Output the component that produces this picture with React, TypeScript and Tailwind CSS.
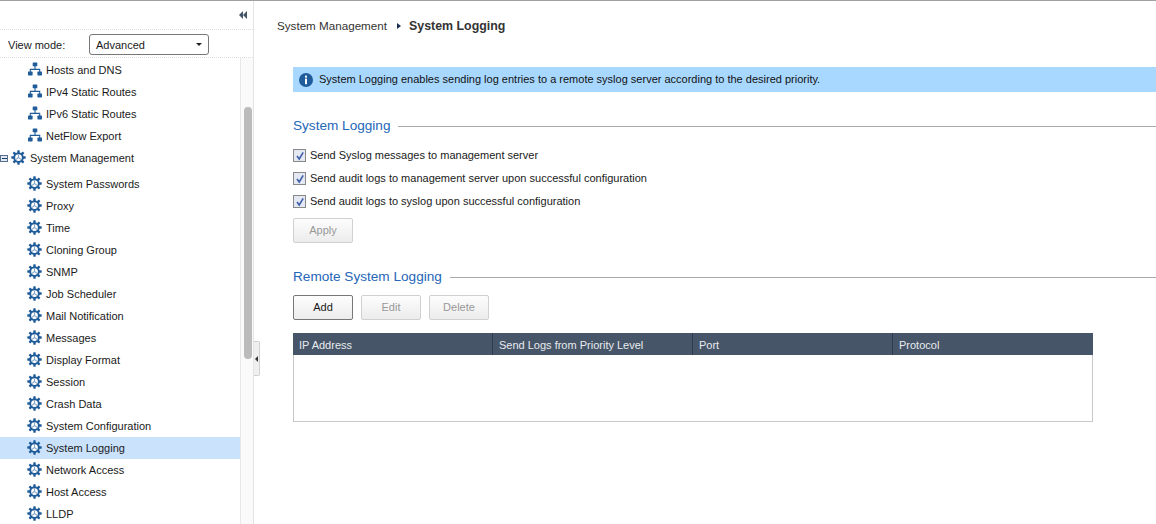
import { ReactNode } from "react";

const GearIcon = ({ className }: { className?: string }) => (
	<svg viewBox="0 0 16 16" className={className}>
		<g fill="#1f5c99">
			<rect x="6.7" y="0.3" width="2.6" height="15.4" rx="0.5" />
			<rect x="6.7" y="0.3" width="2.6" height="15.4" rx="0.5" transform="rotate(45 8 8)" />
			<rect x="6.7" y="0.3" width="2.6" height="15.4" rx="0.5" transform="rotate(90 8 8)" />
			<rect x="6.7" y="0.3" width="2.6" height="15.4" rx="0.5" transform="rotate(135 8 8)" />
		</g>
		<circle cx="8" cy="8" r="4.6" fill="#fff" stroke="#1f5c99" strokeWidth="2" />
		<path d="M8 8V4.4M8 8l-3 2.2M8 8l3 2.2" stroke="#8aa8c8" strokeWidth="1.1" fill="none" />
	</svg>
);

const NetworkIcon = ({ className }: { className?: string }) => (
	<svg viewBox="0 0 14 14" className={className}>
		<g fill="#1f5c99">
			<rect x="4.7" y="0.5" width="4.6" height="3.8" rx="0.6" />
			<rect x="0" y="9.6" width="4.6" height="3.8" rx="0.6" />
			<rect x="9.4" y="9.6" width="4.6" height="3.8" rx="0.6" />
		</g>
		<path d="M7 4v3.4M2.3 10V7.4h9.4V10" stroke="#1f5c99" strokeWidth="1.1" fill="none" />
	</svg>
);

const TreeRow = ({ label, selected }: { label: string; selected?: boolean }) => (
	<div className={`flex h-[22px] items-center pl-[27px] ${selected ? "bg-[#cbe2fd]" : ""}`}>
		<GearIcon className="h-[15px] w-[15px] shrink-0 -translate-y-[1px]" />
		<span className="ml-[4px]">{label}</span>
	</div>
);

const NetRow = ({ label }: { label: string }) => (
	<div className="flex h-[22px] items-center pl-[28px]">
		<NetworkIcon className="h-[14px] w-[14px] shrink-0 -translate-y-[1px]" />
		<span className="ml-[4px]">{label}</span>
	</div>
);

const Btn = ({ children, active }: { children: ReactNode; active?: boolean }) => (
	<button
		className={`h-[25px] w-[60px] rounded-[2px] border bg-gradient-to-b from-[#fdfdfd] to-[#ececec] text-[11px] ${
			active ? "border-[#777] text-[#1a1a1a]" : "border-[#d0d0d0] text-[#999]"
		}`}
	>
		{children}
	</button>
);

const SectionTitle = ({ children }: { children: ReactNode }) => (
	<div className="flex items-center gap-[8px]">
		<h2 className="text-[13.6px] leading-[18px] text-[#2566b8]">{children}</h2>
		<div className="h-px flex-1 bg-[#a8a8a8]" />
	</div>
);

const Check = ({ label }: { label: string }) => (
	<label className="flex h-[23px] items-center gap-[4px]">
		<span className="flex h-[13px] w-[13px] items-center justify-center border border-[#888] bg-[#e4e8f2]">
			<svg viewBox="0 0 10 10" className="h-[10px] w-[10px]">
				<path d="M2 5l2.2 3L8.2 1.4" stroke="#3f5fa8" strokeWidth="1.6" fill="none" />
			</svg>
		</span>
		<span>{label}</span>
	</label>
);

const systemItems = [
	"System Passwords",
	"Proxy",
	"Time",
	"Cloning Group",
	"SNMP",
	"Job Scheduler",
	"Mail Notification",
	"Messages",
	"Display Format",
	"Session",
	"Crash Data",
	"System Configuration",
];

const columns = ["IP Address", "Send Logs from Priority Level", "Port", "Protocol"];

export default function App() {
	return (
		<div className="relative flex h-[524px] w-[1156px] overflow-hidden border-t border-[#a0a0a0] bg-white font-['Liberation_Sans',sans-serif] text-[11px] text-[#1a1a1a]">
			{/* left nav */}
			<aside className="flex h-full w-[254px] shrink-0 flex-col border-r border-[#e4e4e4]">
				<div className="flex h-[29px] shrink-0 items-center justify-end border-b border-dotted border-[#ddd] pr-[6px]">
					<span className="flex">
						<span className="h-0 w-0 border-y-[4px] border-r-[4px] border-y-transparent border-r-[#44546a]" />
						<span className="h-0 w-0 border-y-[4px] border-r-[4px] border-y-transparent border-r-[#44546a]" />
					</span>
				</div>
				<div className="flex h-[28px] shrink-0 items-center border-b border-dotted border-[#ddd] pl-[8px] pt-[1px]">
					<span className="w-[81px] pt-[2px]">View mode:</span>
					<div className="flex h-[21px] w-[120px] items-center justify-between rounded-[3px] border border-[#777] pl-[6px] pr-[6px]">
						<span className="pt-[2px]">Advanced</span>
						<span className="h-0 w-0 border-x-[3px] border-t-[3px] border-x-transparent border-t-[#222]" />
					</div>
				</div>
				<div className="flex min-h-0 flex-1">
					<div className="min-w-0 flex-1 overflow-hidden pt-[1px]">
						<NetRow label="Hosts and DNS" />
						<NetRow label="IPv4 Static Routes" />
						<NetRow label="IPv6 Static Routes" />
						<NetRow label="NetFlow Export" />
						<div className="flex h-[22px] items-center">
							<span className="flex h-[7px] w-[8px] items-center justify-center border border-[#5a6f8c] bg-[#dfe8f3]">
								<span className="h-px w-[5px] bg-[#1f3f6b]" />
							</span>
							<GearIcon className="ml-[3px] h-[15px] w-[15px] shrink-0 -translate-y-[1px]" />
							<span className="ml-[4px]">System Management</span>
						</div>
						<div className="h-[4px]" />
						{systemItems.map((item) => (
							<TreeRow key={item} label={item} />
						))}
						<TreeRow label="System Logging" selected />
						<TreeRow label="Network Access" />
						<TreeRow label="Host Access" />
						<TreeRow label="LLDP" />
					</div>
					<div className="w-[13px] shrink-0 border-l border-[#e8e8e8] bg-[#fafafa] pl-[3px] pt-[49px]">
						<div className="h-[252px] w-[8px] rounded-[4px] bg-[#bbbbbb]" />
					</div>
				</div>
			</aside>

			{/* collapse handle */}
			<div className="absolute left-[254px] top-[340px] flex h-[35px] w-[6px] items-center justify-center rounded-r-[2px] border border-l-0 border-[#d0d0d0] bg-[#efefef]">
				<span className="h-0 w-0 border-y-[3px] border-r-[3px] border-y-transparent border-r-[#333]" />
			</div>

			{/* content */}
			<main className="min-w-0 flex-1 pl-[23px]">
				<div className="flex h-[50px] items-center text-[11.65px] text-[#333]">
					<span>System Management</span>
					<span className="ml-[10px] mr-[8px] h-0 w-0 border-y-[3.5px] border-l-[4px] border-y-transparent border-l-[#1c2f55]" />
					<span className="text-[12.4px] font-bold">System Logging</span>
				</div>
				<div className="ml-[16px]">
					<div className="mt-[16px] flex h-[25px] items-center gap-[6px] bg-[#a8d8ff] pl-[6px] text-[#111]">
						<svg viewBox="0 0 14 14" className="h-[14px] w-[14px] shrink-0">
							<circle cx="7" cy="7" r="7" fill="#1f5c99" />
							<rect x="6" y="2.6" width="2" height="2" fill="#fff" />
							<rect x="6" y="5.6" width="2" height="5.6" fill="#fff" />
						</svg>
						<span>System Logging enables sending log entries to a remote syslog server according to the desired priority.</span>
					</div>
					<div className="mt-[25px]">
						<SectionTitle>System Logging</SectionTitle>
					</div>
					<div className="mt-[9px] flex flex-col">
						<Check label="Send Syslog messages to management server" />
						<Check label="Send audit logs to management server upon successful configuration" />
						<Check label="Send audit logs to syslog upon successful configuration" />
					</div>
					<div className="mt-[5px]">
						<Btn>Apply</Btn>
					</div>
					<div className="mt-[25px]">
						<SectionTitle>Remote System Logging</SectionTitle>
					</div>
					<div className="mt-[9px] flex gap-[8px]">
						<Btn active>Add</Btn>
						<Btn>Edit</Btn>
						<Btn>Delete</Btn>
					</div>
					<div className="mt-[13px] w-[800px]">
						<div className="grid h-[22px] grid-cols-4 bg-[#465567] text-[#e8ebef]">
							{columns.map((c) => (
								<div key={c} className="flex items-center border-r border-[#2f3c4c] pl-[6px] pt-[2px] last:border-r-0">
									{c}
								</div>
							))}
						</div>
						<div className="h-[67px] border border-t-0 border-[#c8c8c8]" />
					</div>
				</div>
			</main>
		</div>
	);
}
